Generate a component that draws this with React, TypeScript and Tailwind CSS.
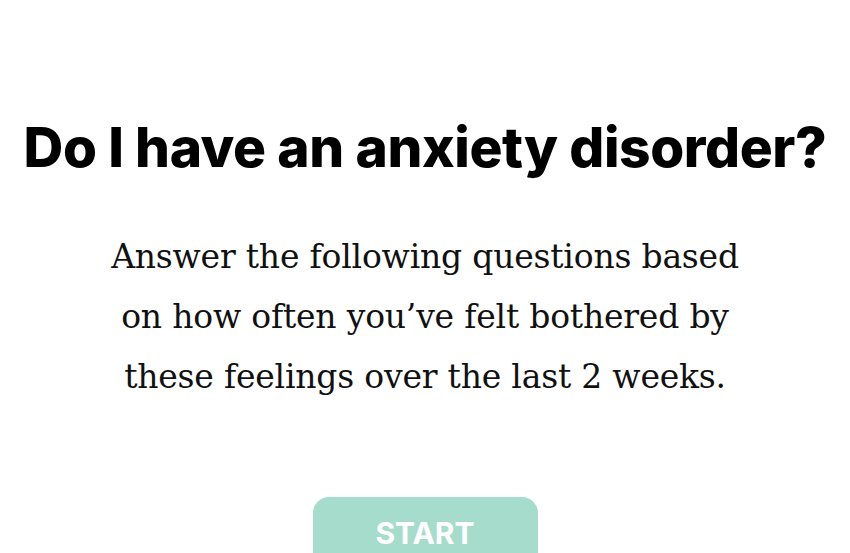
export default function App() {
  return (
    <div className="flex min-h-[553px] flex-col items-center bg-white pt-[112px]">
      <h1 className="whitespace-nowrap font-['Inter',sans-serif] text-[55px] font-extrabold leading-[70px] tracking-[-0.4px] text-black">
        Do I have an anxiety disorder?
      </h1>
      <p className="mt-[45px] text-center font-['DejaVu_Serif',serif] text-[33px] leading-[60px] tracking-[-0.2px] text-[#111]">
        Answer the following questions based
        <br />
        on how often you’ve felt bothered by
        <br />
        these feelings over the last 2 weeks.
      </p>
      <button
        type="button"
        className="mt-[90px] h-[72px] w-[225px] shrink-0 rounded-2xl bg-[#a6dccb] font-['Inter',sans-serif] text-[30px] font-bold text-white"
      >
        START
      </button>
    </div>
  );
}
